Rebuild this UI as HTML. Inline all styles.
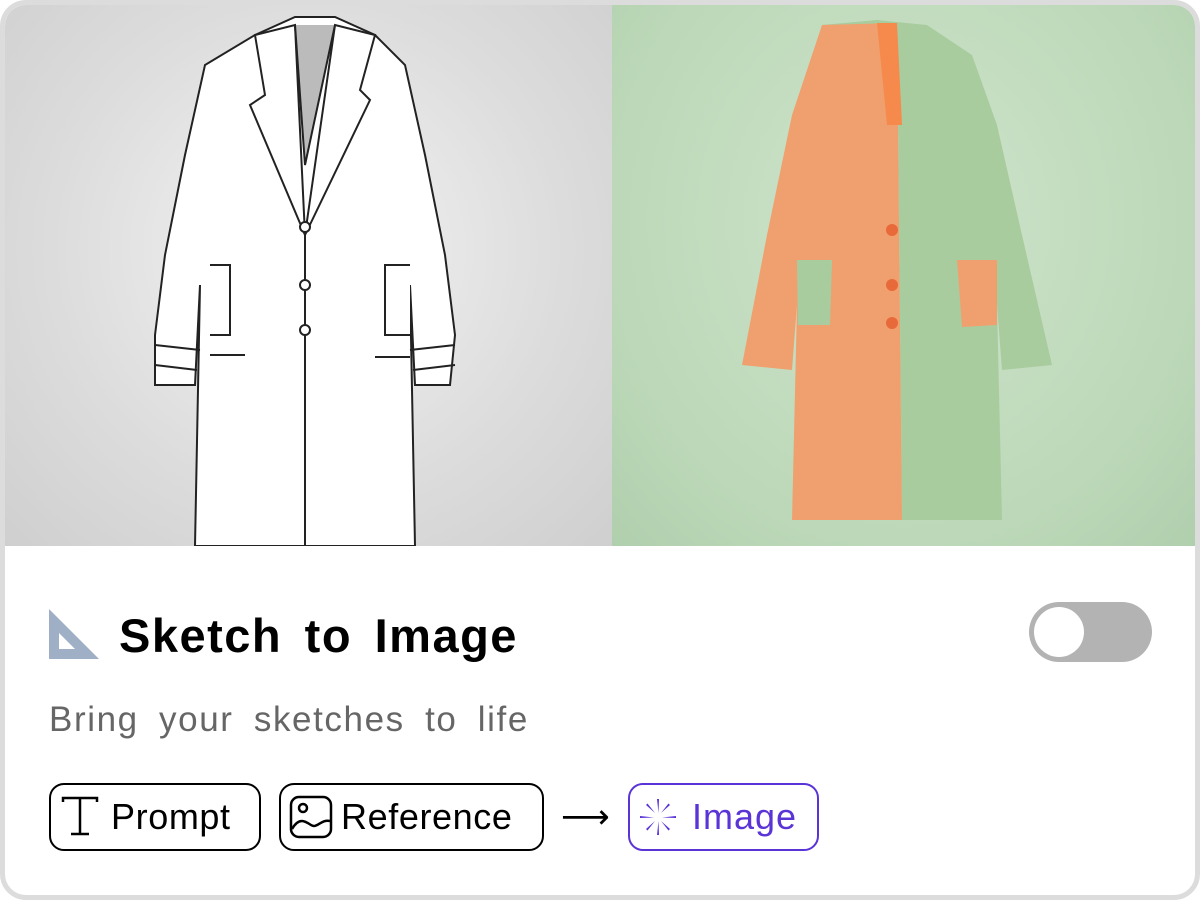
<!DOCTYPE html>
<html><head><meta charset="utf-8"><style>
*{margin:0;padding:0;box-sizing:border-box}
body{width:1200px;height:900px;background:#fff;font-family:"Liberation Sans","DejaVu Sans",sans-serif;overflow:hidden}
.card{position:absolute;left:0;top:0;width:1200px;height:900px;border:5px solid #dcdcdc;border-radius:26px;overflow:hidden;background:#fff}
.img{position:absolute;left:0;top:0;width:1190px;height:541px}
.l{position:absolute;left:0;top:0;width:607px;height:541px;background:radial-gradient(ellipse at 50% 45%,#f4f4f4 0%,#dcdcdc 60%,#cfcfcf 100%)}
.r{position:absolute;left:607px;top:0;width:583px;height:541px;background:radial-gradient(ellipse at 50% 40%,#cfe4cc 0%,#bcd8b8 70%,#b0cfad 100%)}
.title{position:absolute;left:114px;top:603px;font-size:47px;font-weight:bold;color:#000;letter-spacing:1.5px;word-spacing:8px}
.sub{position:absolute;left:44px;top:695px;font-size:35px;color:#666;letter-spacing:1.6px;word-spacing:9px}
.chip{position:absolute;top:778px;height:68px;border:2.5px solid #000;border-radius:15px;font-size:36px;display:flex;align-items:center;padding-left:8px;letter-spacing:0.6px}
.tog{position:absolute;left:1024px;top:597px;width:123px;height:60px;border-radius:30px;background:#b3b3b3}
.knob{position:absolute;left:5px;top:5px;width:50px;height:50px;border-radius:50%;background:#fff}
</style></head><body>
<div class="card">
 <div class="img">
  <div class="l">
   <svg width="607" height="541" viewBox="0 0 607 541" fill="#fff" stroke="#222" stroke-width="2">
    <path d="M250 30 L290 12 L330 12 L370 30 L400 60 L420 150 L440 250 L450 330 L445 380 L410 380 L405 280 L410 541 L190 541 L195 280 L190 380 L150 380 L150 330 L160 250 L180 150 L200 60 Z"/>
    <path d="M250 30 L260 90 L245 100 L300 230 L290 20 Z M370 30 L355 85 L365 95 L300 230 L330 20 Z"/>
    <path d="M290 20 L300 160 L330 20" fill="#bbb"/>
    <path d="M300 230 L300 541 M150 340 L195 345 M450 340 L405 345 M150 360 L192 365 M450 360 L408 365 M205 260 L225 260 L225 330 L205 330 M405 260 L380 260 L380 330 L405 330 M205 350 L240 350 M370 352 L405 352"/>
    <circle cx="300" cy="222" r="5"/><circle cx="300" cy="280" r="5"/><circle cx="300" cy="325" r="5"/>
   </svg>
  </div>
  <div class="r">
   <svg width="583" height="541" viewBox="0 0 583 541">
    <path d="M210 20 L265 15 L315 20 L360 50 L385 120 L410 230 L440 360 L390 365 L385 300 L390 515 L290 515 L285 20 Z" fill="#a9cc9f"/>
    <path d="M210 20 L285 18 L290 515 L180 515 L185 300 L180 365 L130 360 L155 230 L180 110 Z" fill="#f0a06e"/>
    <path d="M265 18 L285 18 L290 120 L275 120 Z" fill="#f58a4c"/>
    <path d="M345 255 L385 255 L385 320 L350 322 Z" fill="#f0a06e"/>
    <path d="M185 255 L220 255 L218 320 L186 320 Z" fill="#a9cc9f"/>
    <circle cx="280" cy="225" r="6" fill="#e86a3a"/><circle cx="280" cy="280" r="6" fill="#e86a3a"/><circle cx="280" cy="318" r="6" fill="#e86a3a"/>
   </svg>
  </div>
 </div>
 <svg style="position:absolute;left:44px;top:604px" width="50" height="50" viewBox="0 0 50 50"><path d="M0 0 L50 50 L0 50 Z M10 24 L10 40 L26 40 Z" fill="#9fb0c6" fill-rule="evenodd"/></svg>
 <div class="title">Sketch to Image</div>
 <div class="tog"><div class="knob"></div></div>
 <div class="sub">Bring your sketches to life</div>
 <div class="chip" style="left:44px;width:212px">
  <svg width="42" height="42" viewBox="0 0 42 42" fill="none" stroke="#000" stroke-width="2.5"><path d="M4 6 V2 H38 V6 M21 2 V38 M12 38 H30"/></svg>
  <span style="margin-left:10px">Prompt</span></div>
 <div class="chip" style="left:274px;width:265px">
  <svg width="44" height="44" viewBox="0 0 44 44" fill="none" stroke="#000" stroke-width="2.5"><rect x="2" y="2" width="40" height="40" rx="8"/><circle cx="14" cy="13" r="4"/><path d="M3 34 C10 22 16 26 22 30 C28 34 32 24 41 26"/></svg>
  <span style="margin-left:8px">Reference</span></div>
 <div style="position:absolute;left:556px;top:792px;font-size:34px">⟶</div>
 <div class="chip" style="left:623px;width:191px;border-color:#5a34d6;color:#5a34d6">
  <svg width="40" height="40" viewBox="0 0 40 40" fill="#5a34d6"><path d="M19 2 L21 2 L20.5 16 Z M19 38 L21 38 L20.5 24 Z M2 19 L2 21 L16 20.5 Z M38 19 L38 21 L24 20.5 Z M8 8 L9.5 6.5 L17 16 Z M32 32 L30.5 33.5 L23 24 Z M32 8 L30.5 6.5 L23 16 Z M8 32 L9.5 33.5 L17 24 Z"/></svg>
  <span style="margin-left:14px;letter-spacing:1px">Image</span></div>
</div>
</body></html>
